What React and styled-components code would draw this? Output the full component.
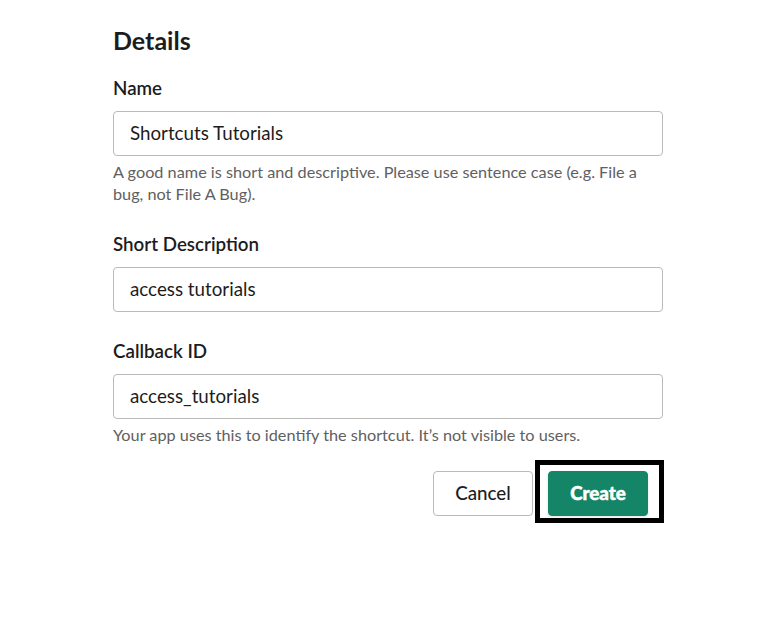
import styled, { createGlobalStyle } from "styled-components"

const GlobalStyle = createGlobalStyle`
  body {
    margin: 0;
    background: #fff;
    font-family: Lato, "Liberation Sans", sans-serif;
    color: #1d1c1d;
  }
`;

const Page = styled.div`
  width: 767px;
  height: 632px;
  padding: 25px 0 0 113px;
  box-sizing: border-box;
`;

const Form = styled.div`
  width: 550px;
`;

const Title = styled.h2`
  margin: 0 0 22px;
  font-size: 25px;
  line-height: 30px;
  font-weight: 700;
`;

const FieldList = styled.div`
  display: flex;
  flex-direction: column;
  gap: 28px;
`;

const Field = styled.div``;

const Label = styled.label`
  display: block;
  font-size: 18.75px;
  line-height: 22px;
  font-weight: 600;
  margin-bottom: 12px;
`;

const Input = styled.input`
  display: block;
  width: 100%;
  height: 45px;
  box-sizing: border-box;
  padding: 0 16px 2px;
  border: 1px solid #bbbabb;
  border-radius: 4px;
  font-family: inherit;
  font-size: 18.75px;
  color: #1d1c1d;
  outline: none;
`;

const Hint = styled.p`
  margin: 5px 0 0;
  font-size: 16.25px;
  line-height: 22px;
  color: #616061;
`;

const Actions = styled.div`
  display: flex;
  justify-content: flex-end;
  gap: 15px;
  margin-top: 25px;
  padding-right: 15px;
`;

const Button = styled.button`
  width: 100px;
  height: 45px;
  box-sizing: border-box;
  border-radius: 4px;
  font-family: inherit;
  font-size: 18.75px;
  padding: 0 0 2px;
  cursor: pointer;
  border: 1px solid ${p => (p.$primary ? "#148567" : "#bbbabb")};
  background: ${p => (p.$primary ? "#148567" : "#fff")};
  color: ${p => (p.$primary ? "#fff" : "#1d1c1d")};
  font-weight: ${p => (p.$primary ? 900 : 500)};
  -webkit-text-stroke: ${p => (p.$primary ? "0.5px #fff" : "0")};
  box-shadow: ${p => (p.$primary ? "0 1px 3px rgba(0,0,0,0.12)" : "none")};
`;

const Highlight = styled.div`
  position: relative;
  display: flex;
`;

const HighlightFrame = styled.div`
  position: absolute;
  left: -13px;
  right: -16px;
  top: -11px;
  bottom: -7px;
  border: 5px solid #000;
  pointer-events: none;
`;

const fields = [
  {
    label: "Name",
    value: "Shortcuts Tutorials",
    hint: "A good name is short and descriptive. Please use sentence case (e.g. File a bug, not File A Bug).",
  },
  { label: "Short Description", value: "access tutorials" },
  {
    label: "Callback ID",
    value: "access_tutorials",
    hint: "Your app uses this to identify the shortcut. It\u2019s not visible to users.",
  },
];

const App = () => {
  return (
    <Page>
      <GlobalStyle />
      <Form>
        <Title>Details</Title>
        <FieldList>
          {fields.map(f => (
            <Field key={f.label}>
              <Label>{f.label}</Label>
              <Input defaultValue={f.value} />
              {f.hint && <Hint>{f.hint}</Hint>}
            </Field>
          ))}
        </FieldList>
        <Actions>
          <Button>Cancel</Button>
          <Highlight>
            <Button $primary>Create</Button>
            <HighlightFrame />
          </Highlight>
        </Actions>
      </Form>
    </Page>
  )
}

export default App
